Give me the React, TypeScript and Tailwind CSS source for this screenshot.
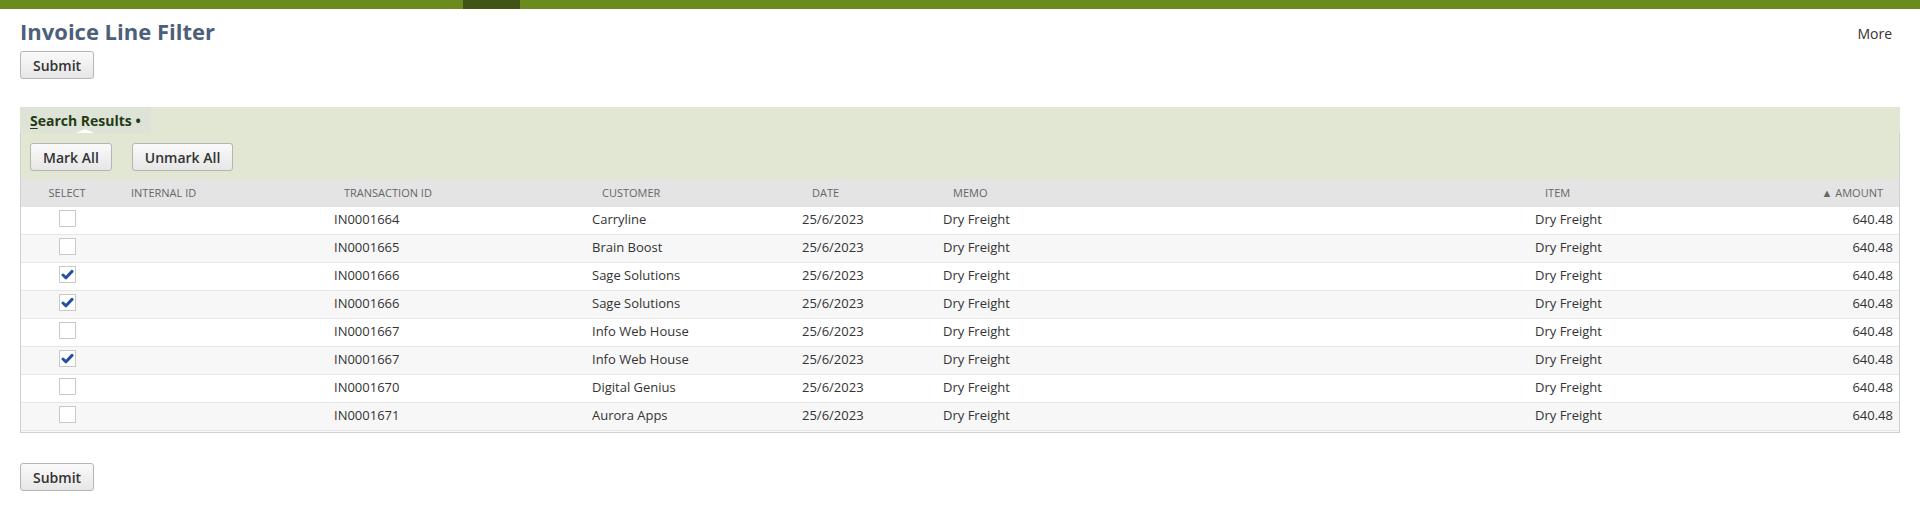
import React from 'react';

type Row = { id: string; customer: string; checked: boolean };

const rows: Row[] = [
  { id: 'IN0001664', customer: 'Carryline', checked: false },
  { id: 'IN0001665', customer: 'Brain Boost', checked: false },
  { id: 'IN0001666', customer: 'Sage Solutions', checked: true },
  { id: 'IN0001666', customer: 'Sage Solutions', checked: true },
  { id: 'IN0001667', customer: 'Info Web House', checked: false },
  { id: 'IN0001667', customer: 'Info Web House', checked: true },
  { id: 'IN0001670', customer: 'Digital Genius', checked: false },
  { id: 'IN0001671', customer: 'Aurora Apps', checked: false },
];

const cols = 'grid grid-cols-[92px_213px_258px_210px_141px_592px_200px_1fr]';

const Button: React.FC<{ label: string }> = ({ label }) => (
  <button className="h-[28px] px-[12px] rounded-[3px] border border-[#b5b5b5] bg-gradient-to-b from-[#fafafa] to-[#e6e6e6] text-[14px] font-semibold text-[#333]">
    {label}
  </button>
);

const Checkbox: React.FC<{ checked: boolean }> = ({ checked }) => (
  <span className="w-[17px] h-[17px] border border-[#c9c9c9] bg-white flex items-center justify-center">
    {checked && (
      <svg width="13" height="13" viewBox="0 0 13 13">
        <path d="M2 7 L5 9.8 L11 3.4" fill="none" stroke="#24529f" strokeWidth="3" strokeLinecap="round" strokeLinejoin="round" />
      </svg>
    )}
  </span>
);

export default function App() {
  return (
    <div className="w-[1920px] h-[510px] bg-white font-['Open_Sans',sans-serif] text-[#333]">
      <div className="h-[9px] bg-[#6b8b1f] flex">
        <div className="ml-[463px] w-[57px] bg-[#415316]" />
      </div>

      <div className="px-[20px]">
        <div className="flex justify-between items-start pt-[7px]">
          <h1 className="text-[22px] leading-[30px] font-bold text-[#4d5f79]">Invoice Line Filter</h1>
          <span className="mt-[7px] mr-[8px] text-[14px] text-[#333]">More</span>
        </div>

        <div className="mt-[5px]">
          <Button label="Submit" />
        </div>

        <div className="mt-[28px]">
          <div className="h-[26px] bg-[#e1e7d2] flex">
            <div className="relative h-full px-[10px] bg-[#dde4d7] flex items-center text-[14px] font-bold text-[#263a15]">
              <span>
                <span className="underline underline-offset-2">S</span>earch Results •
              </span>
              <span className="absolute left-[56px] bottom-0 w-0 h-0 border-x-[9px] border-x-transparent border-b-[4px] border-b-white" />
            </div>
          </div>

          <div className="bg-[#e1e7d2] border-x border-b border-[#cfcfcf]">
            <div className="flex gap-[20px] pl-[9px] pt-[10px] pb-[8px]">
              <Button label="Mark All" />
              <Button label="Unmark All" />
            </div>

            <div className={`${cols} h-[28px] bg-[#e4e4e4] text-[11px] text-[#666] uppercase items-center`}>
              <div className="text-center">Select</div>
              <div className="pl-[18px]">Internal ID</div>
              <div className="pl-[18px]">Transaction ID</div>
              <div className="pl-[18px]">Customer</div>
              <div className="pl-[18px]">Date</div>
              <div className="pl-[18px]">Memo</div>
              <div className="pl-[18px]">Item</div>
              <div className="text-right pr-[16px]">▲ Amount</div>
            </div>

            <div className="bg-[#f7f7f7] pb-[1px]">
              {rows.map((r, i) => (
                <div
                  key={i}
                  className={`${cols} h-[28px] border-b border-[#e6e6e6] text-[13px] text-[#333] pt-[3px] ${i % 2 === 1 ? 'bg-[#f7f7f7]' : 'bg-white'}`}
                >
                  <div className="flex justify-center">
                    <Checkbox checked={r.checked} />
                  </div>
                  <div className="pl-[8px]" />
                  <div className="pl-[8px]">{r.id}</div>
                  <div className="pl-[8px]">{r.customer}</div>
                  <div className="pl-[8px]">25/6/2023</div>
                  <div className="pl-[8px]">Dry Freight</div>
                  <div className="pl-[8px]">Dry Freight</div>
                  <div className="text-right pr-[6px]">640.48</div>
                </div>
              ))}
            </div>
          </div>
        </div>

        <div className="mt-[30px]">
          <Button label="Submit" />
        </div>
      </div>
    </div>
  );
}
